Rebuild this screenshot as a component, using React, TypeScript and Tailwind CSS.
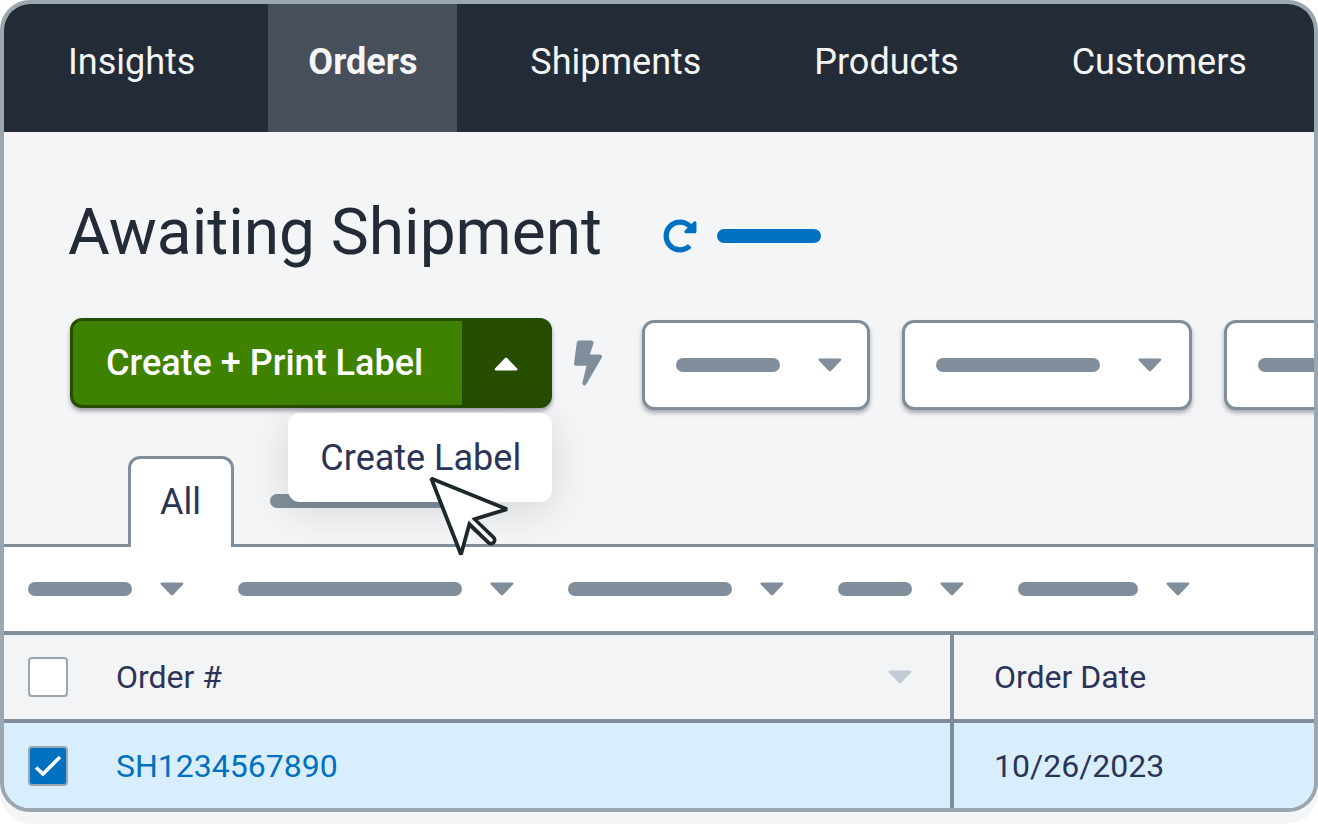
import { useState } from "react";
import { FaBolt, FaRedoAlt } from "react-icons/fa";
import clsx from "clsx";

const NAV_ITEMS = ["Insights", "Orders", "Shipments", "Products", "Customers"];

const ACTION_MENUS = [
  { id: "action-1", width: "w-[228px]", bar: "w-[104px]" },
  { id: "action-2", width: "w-[290px]", bar: "w-[164px]" },
  { id: "action-3", width: "w-[290px]", bar: "w-[164px]" },
];

const FILTERS = [
  { id: "filter-1", bar: "w-[104px]" },
  { id: "filter-2", bar: "w-56" },
  { id: "filter-3", bar: "w-[164px]" },
  { id: "filter-4", bar: "w-[74px]" },
  { id: "filter-5", bar: "w-[120px]" },
];

const ORDERS = [{ id: "SH1234567890", date: "10/26/2023" }];

function Caret({ className }: { className?: string }) {
  return (
    <svg
      viewBox="0 0 24 14"
      className={clsx("h-3.5 w-6 shrink-0 fill-current", className)}
      aria-hidden="true"
    >
      <path d="M1.6 0.6h20.6c1.1 0 1.6 1.2 0.8 2L13 12.9c-0.6 0.6-1.5 0.6-2.1 0L0.8 2.6C0 1.8 0.5 0.6 1.6 0.6z" />
    </svg>
  );
}

function Placeholder({ className }: { className: string }) {
  return (
    <span className={clsx("block h-3.5 shrink-0 rounded-full", className)} />
  );
}

function Pointer() {
  return (
    <svg
      viewBox="0 0 84 84"
      className="pointer-events-none absolute top-[61px] left-[139px] size-[84px]"
      aria-hidden="true"
    >
      <path
        d="M46 49L64 66"
        stroke="#1d282c"
        strokeWidth="11"
        strokeLinecap="round"
      />
      <path
        d="M4.2 4.4L80 35.2L46.5 45.5L42.8 48.5L34 80.5Z"
        fill="#fff"
        stroke="#1d282c"
        strokeWidth="3.8"
        strokeMiterlimit="2"
      />
      <path
        d="M44 46.5L64 66"
        stroke="#fff"
        strokeWidth="3.6"
        strokeLinecap="round"
      />
    </svg>
  );
}

type CheckboxProps = {
  label: string;
  checked: boolean;
  onChange: () => void;
};

function Checkbox({ label, checked, onChange }: CheckboxProps) {
  return (
    <span className="grid size-10">
      <input
        type="checkbox"
        aria-label={label}
        checked={checked}
        onChange={onChange}
        className="peer col-start-1 row-start-1 size-10 appearance-none rounded border-2 border-[#9aa6b0] bg-white checked:bg-[#0070c0]"
      />
      <svg
        viewBox="0 0 40 40"
        className="pointer-events-none invisible col-start-1 row-start-1 size-10 peer-checked:visible"
        fill="none"
        aria-hidden="true"
      >
        <path d="M8 21.5L15 28L32 11" stroke="#fff" strokeWidth="3.6" />
      </svg>
    </span>
  );
}

export default function App() {
  const [activeNav, setActiveNav] = useState("Orders");
  const [menuOpen, setMenuOpen] = useState(true);
  const [selected, setSelected] = useState<string[]>(["SH1234567890"]);

  function toggleOrder(id: string) {
    setSelected((prev) =>
      prev.includes(id) ? prev.filter((item) => item !== id) : [...prev, id],
    );
  }

  return (
    <div className="rounded-[32px] bg-[#f4f5f7] pb-3 font-['Roboto',sans-serif] text-[#2b3457]">
      <main className="overflow-hidden rounded-[30px] border-4 border-[#9aa6b0] bg-[#f4f5f7]">
        <nav className="flex justify-between bg-[#232c36] pr-[27px] pl-6 text-[36px] leading-10 text-[#f4f5f7]">
          {NAV_ITEMS.map((item) => (
            <a
              key={item}
              href="#"
              onClick={() => setActiveNav(item)}
              className={clsx(
                "px-10 pt-[38px] pb-[50px]",
                item === activeNav && "bg-[#47505a] font-bold",
              )}
            >
              {item}
            </a>
          ))}
        </nav>

        <header className="flex items-center gap-[61px] px-16 pt-[65px] pb-[49px]">
          <h1 className="text-[64px] leading-[72px] whitespace-nowrap text-[#232c36]">
            Awaiting Shipment
          </h1>
          <button
            type="button"
            aria-label="Refresh"
            className="flex items-center gap-5 pt-1.5 text-[#0070c0]"
          >
            <FaRedoAlt size={34} />
            <Placeholder className="w-[104px] bg-[#0070c0]" />
          </button>
        </header>

        <div className="flex h-[92px] pl-[66px]">
          <div className="relative z-10 h-[90px] shrink-0">
            <div className="flex h-full overflow-hidden rounded-xl border-3 border-[#264d00] bg-[#264d00] text-white shadow-[0_3px_4px_rgba(30,30,50,0.4)]">
              <button
                type="button"
                className="bg-[#3f8200] pr-[39px] pl-[33px] text-[36px] leading-10 font-medium whitespace-nowrap"
              >
                Create + Print Label
              </button>
              <button
                type="button"
                aria-label="More label options"
                aria-expanded={menuOpen}
                onClick={() => setMenuOpen(!menuOpen)}
                className="grid w-[87px] place-items-center pt-0.5"
              >
                <Caret className="rotate-180" />
              </button>
            </div>
            {menuOpen && (
              <div className="absolute top-[95px] right-0 rounded-xl bg-white shadow-[0_8px_40px_rgba(0,0,0,0.13)]">
                <button
                  type="button"
                  className="pt-[25px] pr-[31px] pb-6 pl-8 text-[36px] leading-10 whitespace-nowrap"
                >
                  Create Label
                </button>
                <Pointer />
              </div>
            )}
          </div>

          <button
            type="button"
            aria-label="Automation"
            className="mr-10 ml-[22px] shrink-0 pb-0.5 text-[#808e9b]"
          >
            <FaBolt className="h-[46px] w-7" />
          </button>

          <div className="flex gap-8 pt-0.5">
            {ACTION_MENUS.map((menu) => (
              <button
                key={menu.id}
                type="button"
                aria-label={menu.id}
                className={clsx(
                  "flex shrink-0 items-center gap-[38px] rounded-xl border-3 border-[#808e9b] bg-white pl-[31px] text-[#808e9b] shadow-[0_3px_4px_rgba(30,30,50,0.35)]",
                  menu.width,
                )}
              >
                <Placeholder className={clsx("bg-[#808e9b]", menu.bar)} />
                <Caret />
              </button>
            ))}
          </div>
        </div>

        <div className="mt-[46px] flex items-end gap-9 border-b-3 border-[#808e9b] pl-31">
          <button
            type="button"
            className="-mb-[3px] rounded-t-xl border-3 border-b-0 border-[#808e9b] bg-white pt-[23px] pr-[30px] pb-[25px] pl-[29px] text-[36px] leading-10"
          >
            All
          </button>
          <div className="pb-9">
            <Placeholder className="w-52 bg-[#808e9b]" />
          </div>
        </div>

        <div className="flex items-center gap-[54px] bg-white px-6 py-[35px] text-[#808e9b]">
          {FILTERS.map((filter) => (
            <button
              key={filter.id}
              type="button"
              aria-label={filter.id}
              className="flex items-center gap-7"
            >
              <Placeholder className={clsx("bg-[#808e9b]", filter.bar)} />
              <Caret />
            </button>
          ))}
        </div>

        <table className="w-full table-fixed border-separate border-spacing-0 text-left text-[32px] leading-10">
          <colgroup>
            <col className="w-[88px]" />
            <col />
            <col className="w-[360px]" />
          </colgroup>
          <thead>
            <tr className="h-[92px] bg-[#f3f4f6]">
              <th className="border-y-4 border-[#808e9b] pl-6">
                <Checkbox
                  label="Select all orders"
                  checked={false}
                  onChange={() => setSelected(ORDERS.map((order) => order.id))}
                />
              </th>
              <th className="border-y-4 border-r-4 border-[#808e9b] pr-[38px] pl-6 font-normal">
                <div className="flex items-center justify-between">
                  Order #
                  <Caret className="text-[#c3ccd4]" />
                </div>
              </th>
              <th className="border-y-4 border-[#808e9b] pl-10 font-normal">
                Order Date
              </th>
            </tr>
          </thead>
          <tbody>
            {ORDERS.map((order) => (
              <tr key={order.id} className="h-[85px] bg-[#d8eefd]">
                <td className="pl-6">
                  <Checkbox
                    label={`Select order ${order.id}`}
                    checked={selected.includes(order.id)}
                    onChange={() => toggleOrder(order.id)}
                  />
                </td>
                <td className="border-r-4 border-[#808e9b] pl-6">
                  <a href="#" className="text-[#0070c0]">
                    {order.id}
                  </a>
                </td>
                <td className="pl-10">{order.date}</td>
              </tr>
            ))}
          </tbody>
        </table>
      </main>
    </div>
  );
}
